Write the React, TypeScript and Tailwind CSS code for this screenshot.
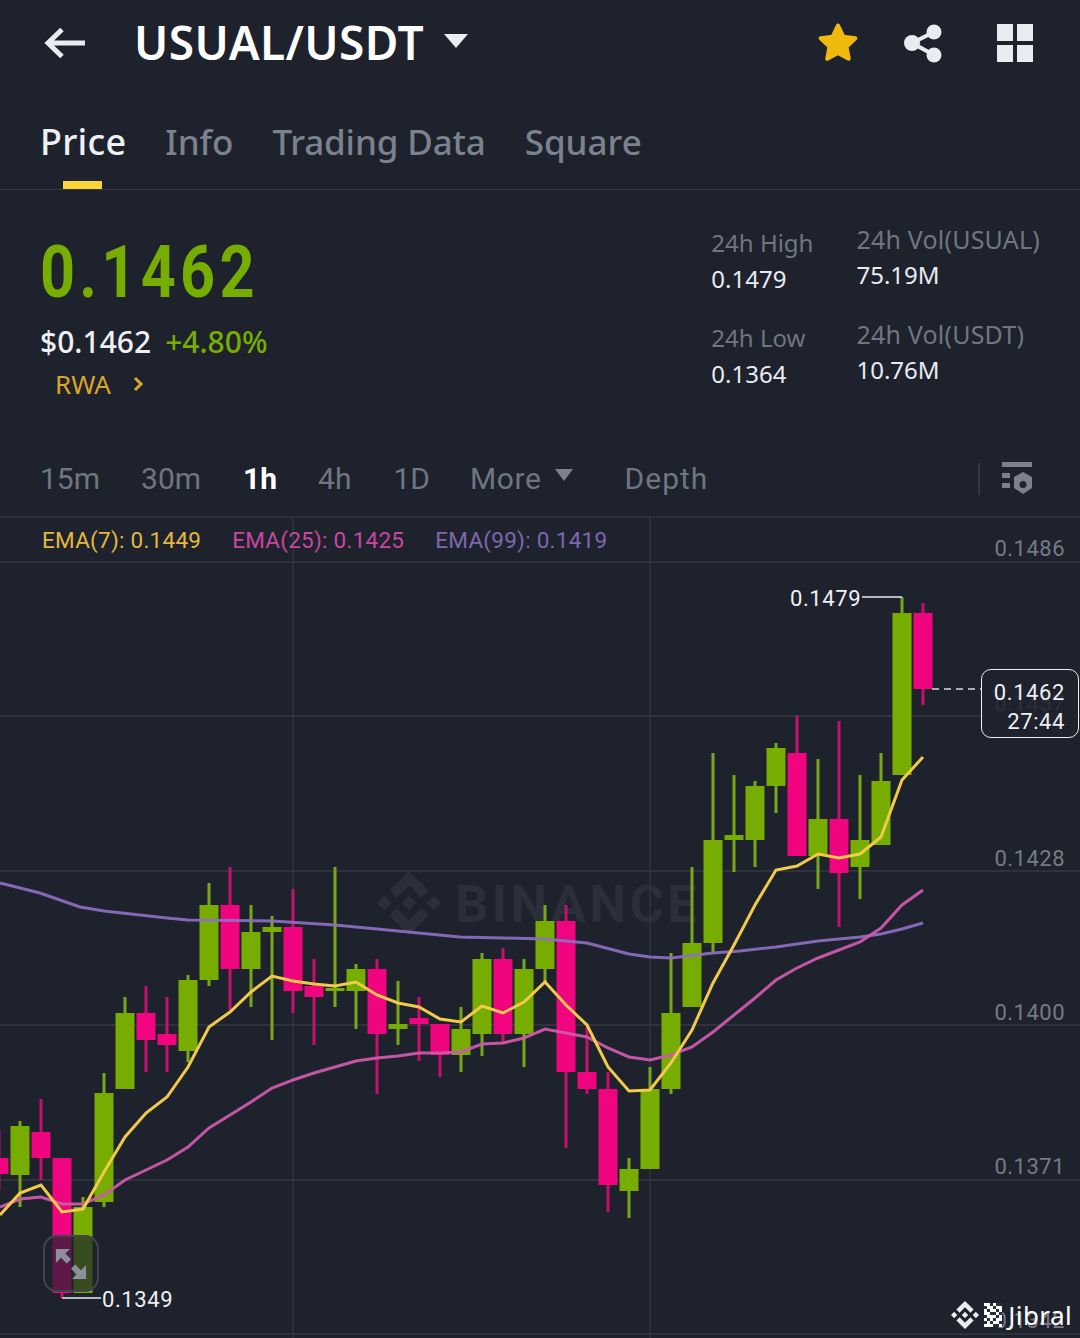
import React from "react";

// [center x, body top, body bottom, wick top, wick bottom, up?]
const candles: [number, number, number, number, number, boolean][] = [
    [-1, 1158, 1174, 1130, 1190, false],
    [20, 1126, 1175, 1121, 1207, true],
    [41, 1132, 1158, 1099, 1180, false],
    [62, 1158, 1293, 1158, 1298, false],
    [83, 1207, 1293, 1197, 1293, true],
    [104, 1093, 1202, 1073, 1207, true],
    [125, 1013, 1089, 997, 1089, true],
    [146, 1013, 1040, 986, 1072, false],
    [167, 1034, 1045, 997, 1072, false],
    [188, 980, 1051, 975, 1062, true],
    [209, 905, 980, 883, 986, true],
    [230, 905, 969, 867, 1010, false],
    [251, 932, 969, 905, 1007, true],
    [272, 927, 932, 916, 1040, true],
    [293, 927, 991, 889, 1013, false],
    [314, 986, 997, 959, 1045, false],
    [335, 988, 991, 867, 1007, true],
    [356, 969, 991, 964, 1029, true],
    [377, 969, 1034, 959, 1094, false],
    [398, 1024, 1029, 981, 1045, true],
    [419, 1018, 1024, 997, 1061, false],
    [440, 1024, 1055, 1024, 1077, false],
    [461, 1029, 1055, 1007, 1072, true],
    [482, 959, 1034, 953, 1056, true],
    [503, 959, 1034, 948, 1042, false],
    [524, 969, 1034, 959, 1067, true],
    [545, 921, 969, 905, 982, true],
    [566, 921, 1072, 905, 1148, false],
    [587, 1072, 1089, 1027, 1094, false],
    [608, 1089, 1185, 1072, 1212, false],
    [629, 1169, 1191, 1158, 1218, true],
    [650, 1089, 1169, 1067, 1169, true],
    [671, 1013, 1089, 953, 1094, true],
    [692, 943, 1007, 867, 1007, true],
    [713, 840, 943, 753, 953, true],
    [734, 835, 840, 775, 872, true],
    [755, 786, 840, 781, 867, true],
    [776, 748, 786, 743, 813, true],
    [797, 753, 856, 716, 856, false],
    [818, 819, 856, 759, 889, true],
    [839, 819, 873, 721, 927, false],
    [860, 840, 867, 775, 899, true],
    [881, 781, 845, 753, 845, true],
    [902, 613, 775, 597, 775, true],
    [923, 613, 689, 603, 705, false],
];

const ema7 =
    "0,1215 20,1193 41,1185 62,1212 83,1209 104,1172 125,1137 146,1113 167,1097 188,1067 209,1027 230,1012 251,992 272,976 293,981 314,984 335,986 356,982 377,995 398,1003 419,1007 440,1019 461,1022 482,1006 503,1013 524,1002 545,982 566,1005 587,1025 608,1067 629,1091 650,1090 671,1063 692,1030 713,983 734,945 755,905 776,870 797,866 818,854 839,858 860,854 881,837 902,780 923,757";
const ema25 =
    "0,1207 20,1199 41,1197 62,1204 83,1204 104,1195 125,1180 146,1170 167,1160 188,1147 209,1128 230,1115 251,1102 272,1088 293,1080 314,1073 335,1067 356,1061 377,1058 398,1056 419,1053 440,1053 461,1052 482,1044 503,1043 524,1038 545,1029 566,1033 587,1037 608,1048 629,1057 650,1060 671,1055 692,1047 713,1032 734,1015 755,998 776,980 797,968 818,958 839,950 860,942 881,928 902,905 923,890";
const ema99 =
    "0,883 40,893 80,907 104,911 167,918 188,920 272,921 335,925 398,931 460,937 503,938 545,939 587,943 629,954 650,957 671,958 713,953 740,951 776,947 818,941 860,937 881,934 902,929 923,923";

const BINANCE_PATH =
    "M38.73 53.2 63.32 28.62 87.92 53.22 102.22 38.91 63.32 0 24.42 38.9zM0 63.31 14.3 49 28.61 63.31 14.3 77.61zM38.73 73.41 63.32 98 87.92 73.4 102.23 87.69 63.33 126.6 24.42 87.72zM98 63.31 112.3 49 126.61 63.3 112.3 77.62zM77.83 63.3 63.32 48.78 48.81 63.28 63.32 77.78z";

// stamp noise next to the watermark name
const noise = [
    "110100", "011011", "101101", "110010", "011101", "101011", "010110", "111001",
];

const AxisLabel = ({ top, children }: { top: string; children: React.ReactNode }) => (
    <span className={`absolute right-[15px] text-[22px] leading-none tracking-[0.5px] text-[#757b86] ${top}`}>
        {children}
    </span>
);

const Stat = ({ label, value, labelClass }: { label: string; value: string; labelClass: string }) => (
    <div className="flex flex-col gap-[8px]">
        <span className={`leading-[28px] text-[#6f7682] ${labelClass}`}>{label}</span>
        <span className="text-[24px] leading-[28px] text-[#e9ecf1]">{value}</span>
    </div>
);

const App = () => {
    return (
        <div className="flex h-[1338px] w-[1080px] flex-col overflow-hidden bg-[#1e222d] font-['Noto_Sans',sans-serif] text-white">
            {/* top bar */}
            <div className="flex h-[86px] shrink-0 items-center pl-[44px] pr-[47px]">
                <svg width="42" height="32" viewBox="0 0 42 32" fill="none" stroke="#e9ecf1" strokeWidth="5">
                    <path d="M41 16H5M18 2.500 4 16l14 13.500" />
                </svg>
                <span className="mb-[2px] ml-[48px] text-[46px] font-semibold leading-none tracking-[0.4px]">USUAL/USDT</span>
                <svg className="mb-[4px] ml-[19px]" width="26" height="16" viewBox="0 0 26 16">
                    <path d="M1 1h24L13 15z" fill="#e9ecf1" />
                </svg>
                <svg className="ml-auto" width="44" height="44" viewBox="0 0 42 42">
                    <path
                        d="M21 4.500 26 15l11.500 1.500-8.500 8 2.200 11.500L21 30.500 10.800 36 13 24.500l-8.500-8L16 15z"
                        fill="#f0b90b"
                        stroke="#f0b90b"
                        strokeWidth="4"
                        strokeLinejoin="round"
                    />
                </svg>
                <svg className="ml-[43px]" width="40" height="42" viewBox="0 0 40 42" fill="#e9ecf1">
                    <circle cx="31" cy="10" r="7.500" />
                    <circle cx="9" cy="21" r="8" />
                    <circle cx="31" cy="33" r="7.500" />
                    <path d="M31 10 9 21l22 12" fill="none" stroke="#e9ecf1" strokeWidth="4" />
                </svg>
                <div className="ml-[54px] grid grid-cols-[16px_16px] grid-rows-[17px_17px] gap-[4px]">
                    <div className="bg-[#e9ecf1]" />
                    <div className="bg-[#e9ecf1]" />
                    <div className="bg-[#e9ecf1]" />
                    <div className="bg-[#e9ecf1]" />
                </div>
            </div>

            {/* tabs */}
            <div className="flex h-[104px] shrink-0 gap-[39px] border-b border-[#343944] pl-[40px] pt-[31px] text-[35px] font-medium leading-[50px] text-[#7b828e]">
                <div className="relative text-[36px] tracking-[0.2px] text-[#eef0f4]">
                    Price
                    <div className="absolute left-[23px] top-[64px] h-[8px] w-[39px] bg-[#fcd535]" />
                </div>
                <div>Info</div>
                <div className="tracking-[-0.15px]">Trading Data</div>
                <div>Square</div>
            </div>

            {/* price block */}
            <div className="flex h-[249px] shrink-0 pl-[40px] pr-[40px]">
                <div className="flex flex-col">
                    <span className="mt-[43px] origin-left scale-x-[0.85] font-['Roboto',sans-serif] text-[72px] font-bold leading-[80px] tracking-[5px] text-[#76ad00]">
                        0.1462
                    </span>
                    <div className="mt-[11px] flex items-center gap-[14px] text-[30px] font-medium leading-[36px]">
                        <span className="text-[#eef0f4]">$0.1462</span>
                        <span className="text-[#76ad00]">+4.80%</span>
                    </div>
                    <div className="ml-[15px] mt-[6px] flex items-center gap-[22px] text-[26px] leading-[36px] text-[#dba52c]">
                        RWA
                        <svg width="12" height="16" viewBox="0 0 12 16" fill="none" stroke="#dba52c" strokeWidth="3">
                            <path d="m2 2 6 6-6 6" />
                        </svg>
                    </div>
                </div>
                <div className="ml-auto flex gap-[43px]">
                    <div className="flex flex-col gap-[31px] pt-[39px]">
                        <Stat label="24h High" value="0.1479" labelClass="text-[24px]" />
                        <Stat label="24h Low" value="0.1364" labelClass="text-[24px]" />
                    </div>
                    <div className="flex flex-col gap-[31px] pt-[35px]">
                        <Stat label="24h Vol(USUAL)" value="75.19M" labelClass="text-[25px] tracking-[0.2px]" />
                        <Stat label="24h Vol(USDT)" value="10.76M" labelClass="text-[25px] tracking-[0.2px]" />
                    </div>
                </div>
            </div>

            {/* intervals */}
            <div className="flex h-[79px] shrink-0 items-center border-b-2 border-[#2b303a] pl-[40px] pr-[47px] pt-[2px] font-['Roboto',sans-serif] text-[30px] leading-none text-[#6f7682]">
                <span>15m</span>
                <span className="ml-[41px]">30m</span>
                <span className="ml-[42px] font-bold text-white">1h</span>
                <span className="ml-[41px]">4h</span>
                <span className="ml-[42px]">1D</span>
                <span className="ml-[40px] tracking-[0.6px]">More</span>
                <svg className="mb-[8px] ml-[13px]" width="18" height="12" viewBox="0 0 18 12">
                    <path d="M0 0h18L9 12z" fill="#7b828e" />
                </svg>
                <span className="ml-[52px] tracking-[1px]">Depth</span>
                <div className="ml-auto h-[32px] w-[2px] bg-[#333843]" />
                <svg className="ml-[22px]" width="31" height="33" viewBox="0 0 31 33" fill="#7b828e">
                    <rect x="0" y="0" width="30" height="5" />
                    <rect x="0" y="11" width="8" height="5" />
                    <rect x="0" y="21" width="8" height="5" />
                    <path
                        fillRule="evenodd"
                        d="M21 10l9 5v11l-9 6-9-6V15zm0 9a3.500 3.500 0 1 0 0 7 3.500 3.500 0 0 0 0-7z"
                    />
                </svg>
            </div>

            {/* chart */}
            <div className="relative flex-1 font-['Roboto',sans-serif]">
                <div className="absolute left-[377px] top-[353px] flex items-center gap-[14px] text-[#2a2f39]">
                    <svg width="64" height="64" viewBox="0 0 126.61 126.61" fill="#2a2f39">
                        <path d={BINANCE_PATH} />
                    </svg>
                    <span className="mt-[4px] text-[52px] font-bold leading-none tracking-[3.500px]">BINANCE</span>
                </div>

                <svg className="absolute inset-0" width="1080" height="820" viewBox="0 518 1080 820" fill="none">
                    {[562, 716, 871, 1025, 1180, 1334].map((y) => (
                        <line key={y} x1="0" x2="1080" y1={y} y2={y} stroke="#333843" strokeWidth="1.500" />
                    ))}
                    <line x1="293" x2="293" y1="518" y2="1338" stroke="#2f3440" strokeWidth="1.500" />
                    <line x1="650" x2="650" y1="518" y2="1338" stroke="#2f3440" strokeWidth="1.500" />

                    {candles.map(([x, top, bottom, wickTop, wickBottom, up]) => (
                        <g key={x}>
                            <line
                                x1={x}
                                x2={x}
                                y1={wickTop}
                                y2={wickBottom}
                                stroke={up ? "#78a81a" : "#c70f70"}
                                strokeWidth="3"
                            />
                            <rect
                                x={x - 9.500}
                                y={top}
                                width="19"
                                height={bottom - top}
                                fill={up ? "#76ad00" : "#f0047f"}
                            />
                        </g>
                    ))}

                    <polyline points={ema99} stroke="#8f6fc4" strokeWidth="3" strokeOpacity="0.9" />
                    <polyline points={ema25} stroke="#cc5aab" strokeWidth="3" strokeOpacity="0.95" />
                    <polyline points={ema7} stroke="#f2ca4a" strokeWidth="3" />

                    {/* high / low / last price leaders */}
                    <path d="M862 597h40" stroke="#e9ecf1" strokeWidth="1.500" />
                    <path d="M62 1298h39" stroke="#e9ecf1" strokeWidth="1.500" />
                    <path d="M932 689h49" stroke="#d7dae0" strokeWidth="1.500" strokeDasharray="7 5" />
                </svg>

                {/* EMA legend */}
                <div className="relative flex h-[44px] items-center gap-[31px] pl-[42px] text-[22.500px] leading-none tracking-[0.25px]">
                    <span className="text-[#e2b93d]">EMA(7): 0.1449</span>
                    <span className="text-[#c8479f]">EMA(25): 0.1425</span>
                    <span className="text-[#7f67b0]">EMA(99): 0.1419</span>
                </div>

                <AxisLabel top="top-[20px]">0.1486</AxisLabel>
                <AxisLabel top="top-[175px]">0.1457</AxisLabel>
                <AxisLabel top="top-[330px]">0.1428</AxisLabel>
                <AxisLabel top="top-[484px]">0.1400</AxisLabel>
                <AxisLabel top="top-[638px]">0.1371</AxisLabel>
                <AxisLabel top="top-[792px]">0.1342</AxisLabel>

                <span className="absolute left-[790px] top-[70px] text-[22px] leading-none tracking-[0.6px] text-[#eef0f4]">
                    0.1479
                </span>
                <span className="absolute left-[102px] top-[771px] text-[22px] leading-none tracking-[0.6px] text-[#eef0f4]">
                    0.1349
                </span>

                {/* last price tag */}
                <div className="absolute left-[981px] top-[151px] flex h-[69px] w-[98px] flex-col items-end justify-center rounded-[10px] border border-[#e9ecf1] bg-[#1e222d]/85 pr-[13px] pt-[7px] text-[22px] leading-[29px] tracking-[0.6px] text-[#eef0f4]">
                    <span>0.1462</span>
                    <span>27:44</span>
                </div>

                {/* expand button */}
                <div className="absolute left-[43px] top-[717px] flex h-[57px] w-[56px] items-center justify-center rounded-[14px] border-2 border-[#3f444f] bg-[#1e222d]/70">
                    <svg width="34" height="34" viewBox="0 0 36 36" fill="#8b909c">
                        <path d="M2 2h15l-5 5 6 6-4.500 4.500-6-6L2 17z" />
                        <path d="M34 34H19l5-5-6-6 4.500-4.500 6 6L34 19z" />
                    </svg>
                </div>

                {/* share watermark */}
                <div className="absolute bottom-[8px] right-[8px] flex items-center font-['Noto_Sans',sans-serif] text-[26px] leading-[30px] tracking-[0.4px] text-white">
                    <svg width="28" height="28" viewBox="0 0 126.61 126.61" fill="#e9ecf1">
                        <path d={BINANCE_PATH} />
                    </svg>
                    <svg className="ml-[4px]" width="20" height="24" viewBox="0 0 18 24">
                        <rect width="18" height="24" fill="#8f939b" />
                        {noise.map((row, y) =>
                            row.split("").map((c, x) => (
                                <rect key={`${x}-${y}`} x={x * 3} y={y * 3} width="3" height="3" fill={c === "1" ? "#ffffff" : "#2a2e38"} />
                            )),
                        )}
                    </svg>
                    <span className="ml-[5px]">Jibral</span>
                </div>
            </div>
        </div>
    );
};

export default App;
